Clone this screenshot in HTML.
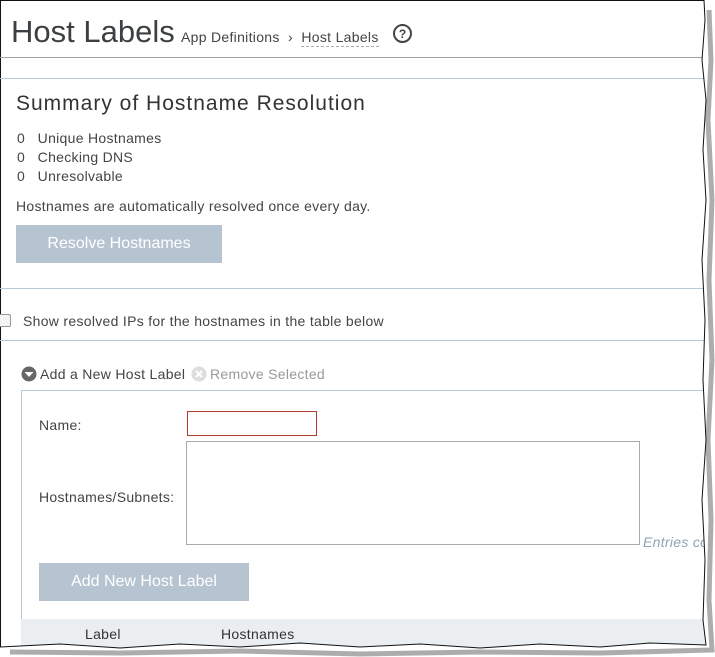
<!DOCTYPE html>
<html><head><style>
body{margin:0;width:715px;height:657px;position:relative;overflow:hidden;background:#fff;font-family:"Liberation Sans",sans-serif;color:#444;}
.a{position:absolute;white-space:nowrap;}
.t{font-size:14px;letter-spacing:0.3px;}
.hl{position:absolute;height:1px;}
</style></head><body>
<div class="a" style="left:0;top:0;width:1px;height:650px;background:#111"></div>
<div class="a" style="left:0;top:0;width:704px;height:1px;background:#111"></div>
<div class="a" style="left:11px;top:14px;font-size:31px;color:#3c4043">Host Labels</div>
<div class="a t" style="left:181px;top:29px;color:#444">App Definitions &nbsp;›&nbsp; <span style="border-bottom:1px dashed #aaa;padding-bottom:1px">Host Labels</span></div>
<svg class="a" style="left:392px;top:23px" width="21" height="21"><circle cx="10.5" cy="10.5" r="8.5" fill="none" stroke="#444" stroke-width="2"/><text x="10.5" y="15" font-size="12" font-weight="bold" text-anchor="middle" fill="#444" font-family="Liberation Sans">?</text></svg>
<div class="hl" style="left:0;top:57px;width:704px;background:#9aa3a8"></div>
<div class="hl" style="left:0;top:78px;width:704px;background:#b8c8d4"></div>
<div class="a" style="left:16px;top:92px;font-size:21px;letter-spacing:1px;color:#333">Summary of Hostname Resolution</div>
<div class="a t" style="left:17px;top:130px">0&nbsp;&nbsp; Unique Hostnames</div>
<div class="a t" style="left:17px;top:149px">0&nbsp;&nbsp; Checking DNS</div>
<div class="a t" style="left:17px;top:168px">0&nbsp;&nbsp; Unresolvable</div>
<div class="a t" style="left:16px;top:198px">Hostnames are automatically resolved once every day.</div>
<div class="a" style="left:16px;top:225px;width:206px;height:38px;background:#b5c4d0;color:#fff;font-size:16px;text-align:center;line-height:38px">Resolve Hostnames</div>
<div class="hl" style="left:0;top:288px;width:704px;background:#b8c8d4"></div>
<div class="a" style="left:-2px;top:314px;width:11px;height:11px;border:1px solid #999;border-radius:2px;background:#f4f4f4"></div>
<div class="a t" style="left:23px;top:313px">Show resolved IPs for the hostnames in the table below</div>
<div class="hl" style="left:0;top:340px;width:704px;background:#b8c8d4"></div>
<svg class="a" style="left:21px;top:366px" width="16" height="16"><circle cx="8" cy="8" r="7.5" fill="#666"/><path d="M3.5 6 L12.5 6 L8 11 Z" fill="#fff"/></svg>
<div class="a t" style="left:40px;top:366px">Add a New Host Label</div>
<svg class="a" style="left:191px;top:366px" width="16" height="16"><circle cx="8" cy="8" r="7.5" fill="#ddd"/><path d="M5 5 L11 11 M11 5 L5 11" stroke="#fff" stroke-width="2"/></svg>
<div class="a t" style="left:210px;top:366px;color:#999">Remove Selected</div>
<div class="a" style="left:21px;top:390px;width:690px;height:228px;border:1px solid #b8c8d4;border-right:none"></div>
<div class="a t" style="left:39px;top:417px">Name:</div>
<div class="a" style="left:187px;top:411px;width:128px;height:23px;border:1px solid #b03a2e"></div>
<div class="a t" style="left:39px;top:489px">Hostnames/Subnets:</div>
<div class="a" style="left:186px;top:441px;width:452px;height:102px;border:1px solid #aaa"></div>
<div class="a t" style="left:643px;top:534px;color:#8fa3b3;font-style:italic">Entries co</div>
<div class="a" style="left:39px;top:563px;width:210px;height:38px;background:#b5c4d0;color:#fff;font-size:16px;text-align:center;line-height:38px">Add New Host Label</div>
<div class="a" style="left:21px;top:619px;width:690px;height:30px;background:#eaeef1"></div>
<div class="a t" style="left:85px;top:626px;color:#333">Label</div>
<div class="a t" style="left:221px;top:626px;color:#333">Hostnames</div>
<svg class="a" style="left:0;top:0" width="715" height="657">
<path d="M704 0 L705 20 L702 60 L706 100 L703 150 L706 200 L702 260 L705 320 L703 380 L706 440 L702 500 L705 560 L703 620 L706 645 L650 643 L600 647 L540 644 L480 648 L420 644 L360 647 L300 643 L240 647 L180 644 L120 648 L60 644 L0 647 L0 657 L715 657 L715 0 Z" fill="#fff"/>
<path d="M709 10 L711 60 L708 120 L712 200 L709 280 L712 360 L708 440 L711 520 L709 600 L712 650 L600 653 L480 652 L360 654 L240 651 L120 653 L10 652" fill="none" stroke="#777" stroke-width="5" opacity="0.6"/>
<path d="M704 0 L705 20 L702 60 L706 100 L703 150 L706 200 L702 260 L705 320 L703 380 L706 440 L702 500 L705 560 L703 620 L706 645 L650 643 L600 647 L540 644 L480 648 L420 644 L360 647 L300 643 L240 647 L180 644 L120 648 L60 644 L0 647" fill="none" stroke="#111" stroke-width="1"/>
</svg>
</body></html>
